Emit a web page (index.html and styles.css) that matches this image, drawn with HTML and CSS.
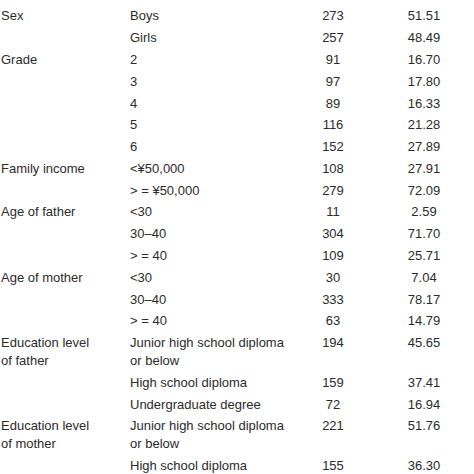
FILE: index.html
```html
<!DOCTYPE html>
<html>
<head>
<meta charset="utf-8">
<link rel="stylesheet" href="styles.css">
</head>
<body>
<table class="stats">
  <colgroup>
    <col class="c-var"><col class="c-cat"><col class="c-n"><col class="c-pct">
  </colgroup>
  <tbody>
    <tr><td class="var">Sex</td><td>Boys</td><td class="num">273</td><td class="num">51.51</td></tr>
    <tr><td class="var"></td><td>Girls</td><td class="num">257</td><td class="num">48.49</td></tr>
    <tr><td class="var">Grade</td><td>2</td><td class="num">91</td><td class="num">16.70</td></tr>
    <tr><td class="var"></td><td>3</td><td class="num">97</td><td class="num">17.80</td></tr>
    <tr><td class="var"></td><td>4</td><td class="num">89</td><td class="num">16.33</td></tr>
    <tr><td class="var"></td><td>5</td><td class="num">116</td><td class="num">21.28</td></tr>
    <tr><td class="var"></td><td>6</td><td class="num">152</td><td class="num">27.89</td></tr>
    <tr><td class="var">Family income</td><td>&lt;¥50,000</td><td class="num">108</td><td class="num">27.91</td></tr>
    <tr><td class="var"></td><td>&gt; = ¥50,000</td><td class="num">279</td><td class="num">72.09</td></tr>
    <tr><td class="var">Age of father</td><td>&lt;30</td><td class="num">11</td><td class="num">2.59</td></tr>
    <tr><td class="var"></td><td>30–40</td><td class="num">304</td><td class="num">71.70</td></tr>
    <tr><td class="var"></td><td>&gt; = 40</td><td class="num">109</td><td class="num">25.71</td></tr>
    <tr><td class="var">Age of mother</td><td>&lt;30</td><td class="num">30</td><td class="num">7.04</td></tr>
    <tr><td class="var"></td><td>30–40</td><td class="num">333</td><td class="num">78.17</td></tr>
    <tr><td class="var"></td><td>&gt; = 40</td><td class="num">63</td><td class="num">14.79</td></tr>
    <tr><td class="var">Education level of father</td><td>Junior high school diploma or below</td><td class="num">194</td><td class="num">45.65</td></tr>
    <tr><td class="var"></td><td>High school diploma</td><td class="num">159</td><td class="num">37.41</td></tr>
    <tr><td class="var"></td><td>Undergraduate degree</td><td class="num">72</td><td class="num">16.94</td></tr>
    <tr><td class="var">Education level of mother</td><td>Junior high school diploma or below</td><td class="num">221</td><td class="num">51.76</td></tr>
    <tr><td class="var"></td><td>High school diploma</td><td class="num">155</td><td class="num">36.30</td></tr>
  </tbody>
</table>
</body>
</html>
```
FILE: styles.css
```css
html, body {
  margin: 0;
  padding: 0;
  background: #ffffff;
}
body {
  font-family: "Liberation Sans", Arial, sans-serif;
  font-size: 13px;
  color: #2b2b2b;
  overflow: hidden;
}
.stats {
  border-collapse: collapse;
  table-layout: fixed;
  width: 471px;
  margin: 5.5px 0 0 1px;
}
.c-var { width: 129px; }
.c-cat { width: 160px; }
.c-n { width: 86px; }
.c-pct { width: 96px; }
.stats td {
  padding: 1.9px 0;
  line-height: 18px;
  vertical-align: top;
}
.stats td.var {
  padding-right: 34px;
}
.stats td.num {
  text-align: center;
}
```
